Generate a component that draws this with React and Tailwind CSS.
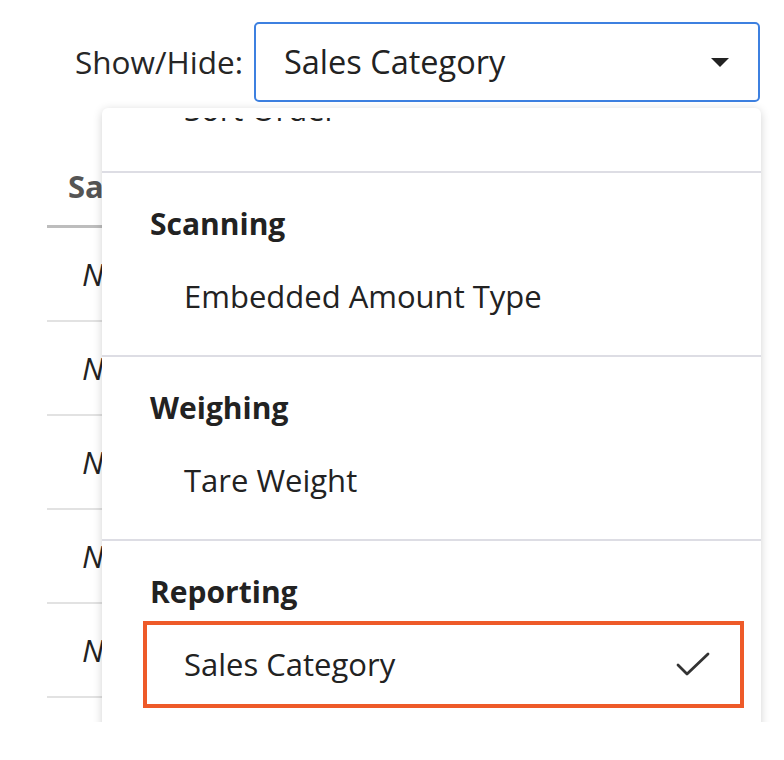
import React from "react";

const rows = ["None", "None", "None", "None", "None"];

function Item({ label, selected }) {
  return (
    <div
      className={
        "ml-[41px] mr-[17px] flex h-[87px] items-center justify-between border-4 pl-[37px] pr-[30px] " +
        (selected ? "border-[#ee5a29]" : "border-transparent")
      }
    >
      <span>{label}</span>
      {selected && (
        <svg width="34" height="26" viewBox="0 0 34 26" fill="none">
          <polyline
            points="2,13 11,22 32,2"
            stroke="#333"
            strokeWidth="2.8"
            strokeLinecap="round"
            strokeLinejoin="round"
          />
        </svg>
      )}
    </div>
  );
}

function Section({ title, items, selected }) {
  return (
    <div className="border-t-2 border-[#dddde4] pb-[15px] pt-[31px]">
      <div className="h-[40px] pl-[48px] text-[30px] font-bold leading-[40px] text-[#222]">
        {title}
      </div>
      <div className="mt-[9px]">
        {items.map((item) => (
          <Item key={item} label={item} selected={item === selected} />
        ))}
      </div>
    </div>
  );
}

export default function App() {
  return (
    <div className="relative h-[722px] overflow-hidden bg-white font-['Open_Sans',sans-serif] text-[31px] text-[#222]">
      <div className="ml-[75px] mt-[22px] flex items-center gap-[11px]">
        <span className="text-[31.5px] text-[#262626]">Show/Hide:</span>
        <div className="flex h-[80px] w-[506px] items-center justify-between rounded-[5px] border-2 border-[#3d80e0] pl-[28px] pr-[29px]">
          <span className="text-[32.5px]">Sales Category</span>
          <svg width="18" height="9" viewBox="0 0 18 9">
            <polygon points="0,0 18,0 9,9" fill="#222" />
          </svg>
        </div>
      </div>

      <div className="ml-[47px] mt-[45px] w-[700px]">
        <div className="flex h-[81px] items-center border-b-[3px] border-[#bdbdbd] pl-[21px] font-bold text-[#555]">
          Sales Category
        </div>
        {rows.map((r, i) => (
          <div
            key={i}
            className="flex h-[94px] items-center border-b-2 border-[#e2e2e2] pl-[35px] italic"
          >
            {r}
          </div>
        ))}
      </div>

      <div className="absolute left-[102px] top-[108px] flex h-[640px] w-[659px] flex-col rounded-t-md bg-white pt-[10px] shadow-[0_2px_10px_rgba(0,0,0,0.18)]">
        <div className="flex-1 overflow-hidden">
          <div className="-mt-[52px]">
            <div className="pb-[18px]">
              <Item label="Sort Order" />
            </div>
            <Section title="Scanning" items={["Embedded Amount Type"]} />
            <Section title="Weighing" items={["Tare Weight"]} />
            <Section
              title="Reporting"
              items={["Sales Category"]}
              selected="Sales Category"
            />
          </div>
        </div>
      </div>
    </div>
  );
}
